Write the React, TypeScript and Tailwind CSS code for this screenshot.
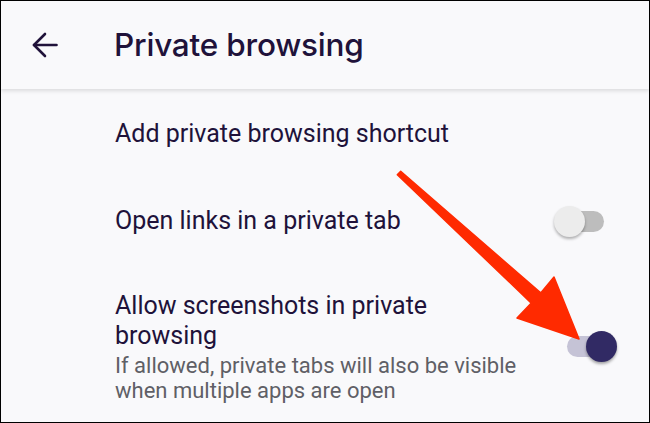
export default function App() {
  return (
    <div className="relative w-[650px] h-[423px] overflow-hidden border border-black bg-[#f9f9fb] font-['Roboto',sans-serif] text-[#20123a]">
      <header className="relative z-10 flex h-[88px] items-center bg-[#f9f9fb] shadow-[0_2px_4px_rgba(0,0,0,0.12)]">
        <div className="flex w-[113px] justify-start pl-[31px]">
          <svg width="26" height="26" viewBox="0 0 26 26" fill="none" stroke="#20123a" strokeWidth="2.6" strokeLinecap="round" strokeLinejoin="round">
            <path d="M24.5 13H2" />
            <path d="M13 2L2 13l11 11" />
          </svg>
        </div>
        <h1 className="font-['Inter',sans-serif] text-[31.5px] font-medium tracking-[-0.2px]">Private browsing</h1>
      </header>

      <div className="flex flex-col pl-[114px] pr-[32px]">
        <div className="flex h-[90px] items-center">
          <span className="text-[25px]">Add private browsing shortcut</span>
        </div>

        <div className="flex h-[84px] items-center justify-between">
          <span className="text-[25px]">Open links in a private tab</span>
          <div className="mr-[13px]">
            <Toggle on={false} />
          </div>
        </div>

        <div className="flex items-start justify-between pt-[28px]">
          <div className="flex w-[412px] flex-col">
            <span className="text-[25px] leading-[30px]">Allow screenshots in private browsing</span>
            <span className="mt-[2px] text-[22px] leading-[25px] text-[#5f5f66]">
              If allowed, private tabs will also be visible when multiple apps are open
            </span>
          </div>
          <div className="mt-[40px]">
            <Toggle on={true} />
          </div>
        </div>
      </div>

      <svg className="pointer-events-none absolute left-0 top-0" width="650" height="423">
        <polygon
          points="399.7,170.2 539.7,291.9 553,276 578,338 516,317 530.3,302.1 396.3,173.8"
          fill="#ff2a00"
          stroke="#ff2a00"
          strokeWidth="1.5"
          strokeLinejoin="round"
        />
      </svg>
    </div>
  );
}

function Toggle({ on }: { on: boolean }) {
  if (on) {
    return (
      <div className="relative h-[31px] w-[50px]">
        <div className="absolute left-0 top-[5px] h-[21px] w-[40px] rounded-full bg-[#c5c3d6]" />
        <div className="absolute right-0 top-0 h-[31px] w-[31px] rounded-full bg-[#312a64] shadow-[0_2px_3px_rgba(0,0,0,0.35)]" />
      </div>
    );
  }
  return (
    <div className="relative h-[31px] w-[50px]">
      <div className="absolute right-0 top-[5px] h-[21px] w-[40px] rounded-full bg-[#bdbdbd]" />
      <div className="absolute left-0 top-0 h-[31px] w-[31px] rounded-full bg-[#ececec] shadow-[0_2px_3px_rgba(0,0,0,0.3)]" />
    </div>
  );
}
